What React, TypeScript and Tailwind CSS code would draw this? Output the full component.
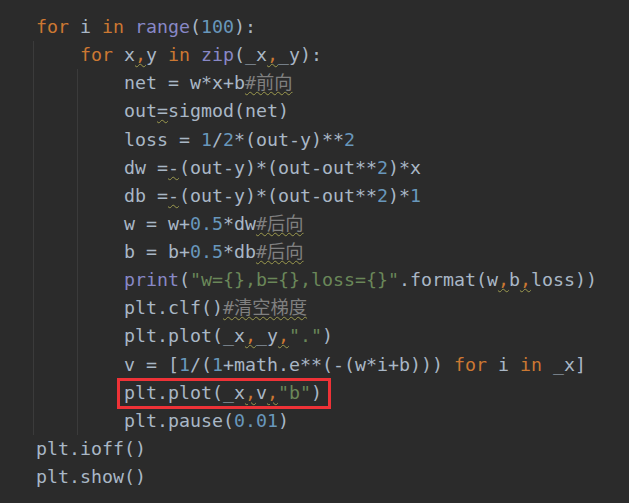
const kw = "text-[#cc7832]";
const num = "text-[#6897bb]";
const bi = "text-[#8888c6]";
const str = "text-[#6a8759]";
const cmt = "text-[#808080]";
const warn = "underline decoration-wavy decoration-[#9c9a4e] decoration-1 underline-offset-[2px]";

function K({ children }: { children: React.ReactNode }) {
  return <span className={kw}>{children}</span>;
}
function N({ children }: { children: React.ReactNode }) {
  return <span className={num}>{children}</span>;
}
function B({ children }: { children: React.ReactNode }) {
  return <span className={bi}>{children}</span>;
}
function S({ children }: { children: React.ReactNode }) {
  return <span className={str}>{children}</span>;
}
// comma with a weak-warning squiggle
function C() {
  return <span className={`${kw} ${warn}`}>,</span>;
}
function Cm({ children }: { children: React.ReactNode }) {
  return <span className={`${cmt} ${warn}`}>{children}</span>;
}
function W({ children }: { children: React.ReactNode }) {
  return <span className={warn}>{children}</span>;
}

function Line({ children }: { children?: React.ReactNode }) {
  return <div className="h-[28.125px] whitespace-pre">{children}</div>;
}

export default function App() {
  return (
    <div
      className="w-[629px] h-[503px] overflow-hidden bg-[#2b2b2b] text-[#a9b7c6] text-[18.27px] leading-[28.125px] pt-[13px] pl-[36px]"
      style={{ fontFamily: '"DejaVu Sans Mono", "Noto Sans CJK SC", monospace' }}
    >
      <Line>
        <K>for</K> i <K>in</K> <B>range</B>(<N>100</N>):
      </Line>
      <div className="ml-[-3px] border-l border-[#3b3b3b] pl-[46px]">
        <Line>
          <K>for</K> x<C />y <K>in</K> <B>zip</B>(_x<C />_y):
        </Line>
        <div className="ml-[-3px] border-l border-[#3b3b3b] pl-[46px]">
          <Line>
            net = w*x+b<Cm>#前向</Cm>
          </Line>
          <Line>
            out<W>=</W>sigmod(net)
          </Line>
          <Line>
            loss = <N>1</N>/<N>2</N>*(out-y)**<N>2</N>
          </Line>
          <Line>
            dw =<W>-</W>(out-y)*(out-out**<N>2</N>)*x
          </Line>
          <Line>
            db =<W>-</W>(out-y)*(out-out**<N>2</N>)*<N>1</N>
          </Line>
          <Line>
            w = w+<N>0.5</N>*dw<Cm>#后向</Cm>
          </Line>
          <Line>
            b = b+<N>0.5</N>*db<Cm>#后向</Cm>
          </Line>
          <Line>
            <B>print</B>(<S>{'"w={},b={},loss={}"'}</S>.format(w<C />b<C />loss))
          </Line>
          <Line>
            plt.clf()<Cm>#清空梯度</Cm>
          </Line>
          <Line>
            plt.plot(_x<C />_y<C /><S>"."</S>)
          </Line>
          <Line>
            v = [<N>1</N>/(<N>1</N>+math.e**(-(w*i+b))) <K>for</K> i <K>in</K> _x]
          </Line>
          <Line>
            <span className="relative">
              plt.plot(_x<C />v<C /><S>"b"</S>)
              <span className="absolute left-[-7px] right-[-9px] top-[-4px] bottom-[-6px] border-[3px] border-[#ee3237]" />
            </span>
          </Line>
          <Line>
            plt.pause(<N>0.01</N>)
          </Line>
        </div>
      </div>
      <Line>plt.ioff()</Line>
      <Line>plt.show()</Line>
    </div>
  );
}
